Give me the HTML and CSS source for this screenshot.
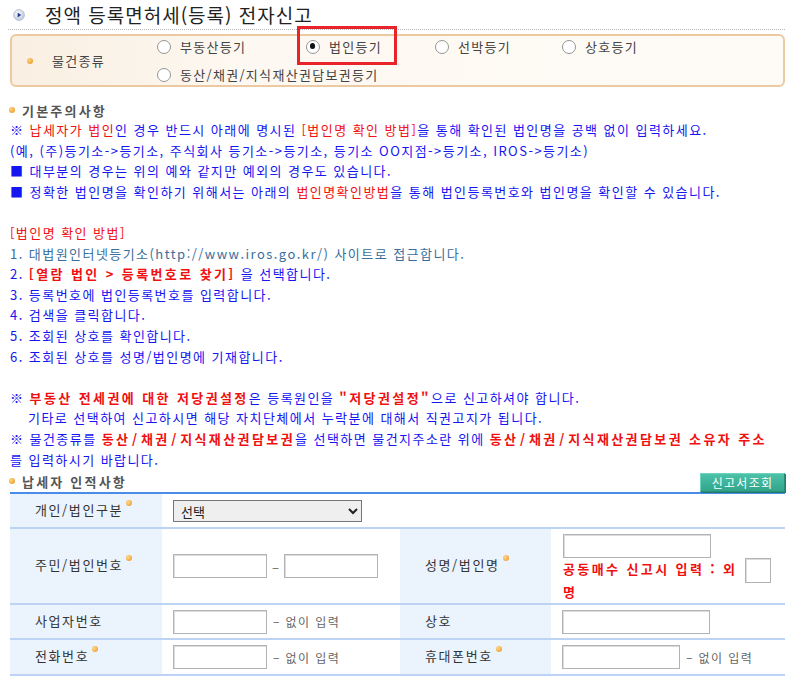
FILE: index.html
```html
<!DOCTYPE html>
<html lang="ko">
<head>
<meta charset="utf-8">
<title>정액 등록면허세(등록) 전자신고</title>
<link rel="stylesheet" href="styles.css">
</head>
<body>
<div class="page">
  <h1 class="title">
    <svg class="title-icon" width="12" height="12" viewBox="0 0 12 12">
      <defs>
        <radialGradient id="tg" cx="40%" cy="35%" r="70%">
          <stop offset="0" stop-color="#ffffff"/>
          <stop offset="1" stop-color="#b8c4d8"/>
        </radialGradient>
      </defs>
      <circle cx="6" cy="6" r="5.4" fill="url(#tg)" stroke="#aab6cc" stroke-width="0.8"/>
      <path d="M4.6 3.6 L8.2 6 L4.6 8.4 Z" fill="#1d3c9c"/>
    </svg>
    <span>정액 등록면허세(등록) 전자신고</span>
  </h1>

  <div class="kind-box">
    <div class="kind-label"><span class="dot"></span>물건종류</div>
    <div class="kind-options">
      <div class="opt-row">
        <label class="opt w1"><span class="radio"></span>부동산등기</label>
        <label class="opt w2"><span class="radio checked"></span>법인등기</label>
        <label class="opt w3"><span class="radio"></span>선박등기</label>
        <label class="opt"><span class="radio"></span>상호등기</label>
      </div>
      <div class="opt-row">
        <label class="opt"><span class="radio"></span>동산/채권/지식재산권담보권등기</label>
      </div>
    </div>
    <div class="highlight"></div>
  </div>

  <h2 class="sec"><span class="dot"></span>기본주의사항</h2>
  <div class="notes">
    <span class="b">※ </span><span class="r">납세자가</span> <span class="r">법인</span><span class="b">인 경우 반드시 아래에 명시된 </span><span class="r">[법인명 확인 방법]</span><span class="b">을 통해 확인된 법인명을 공백 없이 입력하세요.</span><br>
    <span class="b">(예, (주)등기소-&gt;등기소, 주식회사 등기소-&gt;등기소, 등기소 OO지점-&gt;등기소, IROS-&gt;등기소)</span><br>
    <span class="b">■ 대부분의 경우는 위의 예와 같지만 예외의 경우도 있습니다.</span><br>
    <span class="b">■ 정확한 법인명을 확인하기 위해서는 아래의 </span><span class="r">법인명확인방법</span><span class="b">을 통해 법인등록번호와 법인명을 확인할 수 있습니다.</span><br>
    <br>
    <span class="r">[법인명 확인 방법]</span><br>
    <span class="s">1. 대법원인터넷등기소(http://www.iros.go.kr/) 사이트로 접근합니다.</span><br>
    <span class="b">2. </span><span class="rb">[열람 법인 &gt; 등록번호로 찾기]</span><span class="b"> 을 선택합니다.</span><br>
    <span class="b">3. 등록번호에 법인등록번호를 입력합니다.</span><br>
    <span class="b">4. 검색을 클릭합니다.</span><br>
    <span class="b">5. 조회된 상호를 확인합니다.</span><br>
    <span class="b">6. 조회된 상호를 성명/법인명에 기재합니다.</span><br>
    <br>
    <span class="b">※ </span><span class="rb">부동산 전세권에 대한 저당권설정</span><span class="b">은 등록원인을 </span><span class="rb">"저당권설정"</span><span class="b">으로 신고하셔야 합니다.</span><br>
    <span class="b indent">기타로 선택하여 신고하시면 해당 자치단체에서 누락분에 대해서 직권고지가 됩니다.</span><br>
    <span class="b">※ 물건종류를 </span><span class="rb">동산<span class="sl">/</span>채권<span class="sl">/</span>지식재산권담보권</span><span class="b">을 선택하면 물건지주소란 위에 </span><span class="rb">동산<span class="sl">/</span>채권<span class="sl">/</span>지식재산권담보권 소유자 주소</span><br>
    <span class="b">를 입력하시기 바랍니다.</span>
  </div>

  <div class="sec-row">
    <h2 class="sec"><span class="dot"></span>납세자 인적사항</h2>
    <button class="btn" type="button">신고서조회</button>
  </div>

  <div class="form-grid">
    <div class="lbl"><span>개인/법인구분<i class="req"></i></span></div>
    <div class="val span3">
      <select class="sel"><option>선택</option></select>
    </div>

    <div class="lbl"><span>주민/법인번호<i class="req"></i></span></div>
    <div class="val">
      <input class="inp w94" type="text"><span class="dash">–</span><input class="inp w94" type="text">
    </div>
    <div class="lbl"><span>성명/법인명<i class="req"></i></span></div>
    <div class="val top">
      <input class="inp w148" type="text">
      <div class="joint"><span class="rb">공동매수 신고시 입력 : 외</span> <input class="inp small" type="text"><br><span class="rb">명</span></div>
    </div>

    <div class="lbl"><span>사업자번호</span></div>
    <div class="val"><input class="inp w94" type="text"><span class="hint">– 없이 입력</span></div>
    <div class="lbl"><span>상호</span></div>
    <div class="val"><input class="inp w148" type="text"></div>

    <div class="lbl"><span>전화번호<i class="req"></i></span></div>
    <div class="val"><input class="inp w94" type="text"><span class="hint">– 없이 입력</span></div>
    <div class="lbl"><span>휴대폰번호<i class="req"></i></span></div>
    <div class="val"><input class="inp w118" type="text"><span class="hint">– 없이 입력</span></div>
  </div>
</div>
</body>
</html>
```

FILE: styles.css
```css
* { box-sizing: border-box; }

body {
  margin: 0;
  background: #fff;
  color: #333;
  font-family: "Noto Sans CJK KR", "Noto Sans", sans-serif;
  font-size: 13px;
}

.page {
  width: 785px;
  padding-left: 10px;
}

/* title */
.title {
  display: flex;
  align-items: center;
  height: 30px;
  margin: 0 0 0 -2px;
  padding-left: 5px;
  border-bottom: 1px dotted #b4b4b4;
  font-size: 19px;
  font-weight: normal;
  color: #222;
  letter-spacing: 1px;
}
.title-icon { margin-right: 20px; flex: none; }

/* kind box */
.kind-box {
  position: relative;
  display: flex;
  align-items: center;
  height: 53px;
  margin-top: 4px;
  border: 2px solid #ebcaa2;
  border-radius: 6px;
  background: linear-gradient(90deg, #f9efe2 0%, #fdf8f1 30%, #fefbf6 100%);
}
.kind-label {
  display: flex;
  align-items: center;
  width: 145px;
  padding-left: 15px;
  color: #444;
  letter-spacing: 1.3px;
}
.dot {
  display: inline-block;
  width: 6px;
  height: 6px;
  border-radius: 50%;
  background: radial-gradient(circle at 35% 35%, #ffd27a, #e8901c);
  flex: none;
}
.kind-label .dot { margin-right: 19px; }
.kind-options {
  display: flex;
  flex-direction: column;
  gap: 8px;
}
.opt-row { display: flex; height: 20px; align-items: center; }
.opt {
  display: inline-flex;
  align-items: center;
  color: #444;
  letter-spacing: 1.3px;
}
.opt.w1 { width: 149px; }
.opt.w2 { width: 129px; }
.opt.w3 { width: 127px; }
.radio {
  display: inline-block;
  width: 14px;
  height: 14px;
  margin-right: 9px;
  border: 1.6px solid #959595;
  border-radius: 50%;
  background: #fff;
  position: relative;
  flex: none;
}
.radio.checked::after {
  content: "";
  position: absolute;
  left: 2.7px;
  top: 2.7px;
  width: 5.4px;
  height: 5.4px;
  border-radius: 50%;
  background: #111;
}
.highlight {
  position: absolute;
  left: 285px;
  top: -10px;
  width: 100px;
  height: 39px;
  border: 3px solid #e8232a;
}

/* section headers */
.sec {
  display: flex;
  align-items: center;
  height: 20px;
  margin: 13px 0 0 -1px;
  font-size: 13px;
  font-weight: bold;
  color: #555;
  letter-spacing: 2.2px;
}
.sec .dot { margin-right: 7px; }

/* notes */
.notes {
  line-height: 20.6px;
  white-space: nowrap;
  letter-spacing: 1.45px;
}
.b { color: #1515f0; }
.r { color: #f01010; }
.rb { color: #f01010; font-weight: bold; letter-spacing: 2.4px; }
.sl { margin: 0 1.5px; }
.s { color: #3a6e9c; }
.indent { padding-left: 18px; }

.sec-row {
  display: flex;
  justify-content: space-between;
  align-items: flex-end;
  height: 22px;
}
.sec-row .sec { margin: 0 0 1px -1px; }
.btn {
  width: 85px;
  height: 19px;
  padding: 0;
  border: 1px solid #2b8f78;
  border-top-color: #6fd3bd;
  border-left-color: #6fd3bd;
  background: linear-gradient(#4cc2a8, #31a58b);
  color: #fff;
  font-family: inherit;
  font-size: 12px;
  letter-spacing: 1.3px;
  box-shadow: 1px 1px 0 #23796a;
}

/* form grid */
.form-grid {
  display: grid;
  grid-template-columns: 152px 238px 151px 234px;
  grid-template-rows: 35px 76px 35px 36px;
  border-top: 2px solid #4a8de8;
}
.lbl, .val {
  display: flex;
  align-items: center;
  border-bottom: 2px solid #bcd3f3;
}
.lbl {
  padding-left: 25px;
  padding-bottom: 3px;
  background: #ebf3fd;
  color: #333;
  letter-spacing: 1.6px;
}
.val { padding-left: 11px; background: #fff; }
.val.span3 { grid-column: span 3; }
.req {
  display: inline-block;
  width: 6px;
  height: 6px;
  margin-left: 3px;
  vertical-align: 9px;
  border-radius: 50%;
  background: radial-gradient(circle at 35% 35%, #ffd98a, #eb9020);
}
.sel {
  width: 189px;
  height: 22px;
  font-family: inherit;
  font-size: 13px;
  color: #222;
  border: 1px solid #767676;
  border-radius: 0;
  padding-left: 3px;
}
.inp {
  height: 24px;
  border: 1px solid #b3b3b3;
  box-shadow: inset 1px 1px 0 #dcdcdc;
  font-family: inherit;
  font-size: 13px;
  padding: 0 3px;
  background: #fff;
}
.w94 { width: 94px; }
.w148 { width: 148px; }
.w118 { width: 118px; }
.dash {
  width: 17px;
  text-align: center;
  color: #666;
}
.hint {
  margin-left: 6px;
  color: #666;
  font-size: 12px;
  letter-spacing: 1.4px;
}
.val.top {
  flex-direction: column;
  align-items: flex-start;
  justify-content: flex-start;
  padding-top: 5px;
  padding-left: 12px;
}
.joint {
  line-height: 18px;
  white-space: nowrap;
}
.inp.small {
  width: 26px;
  height: 25px;
  margin-left: 4px;
  vertical-align: middle;
}
```
